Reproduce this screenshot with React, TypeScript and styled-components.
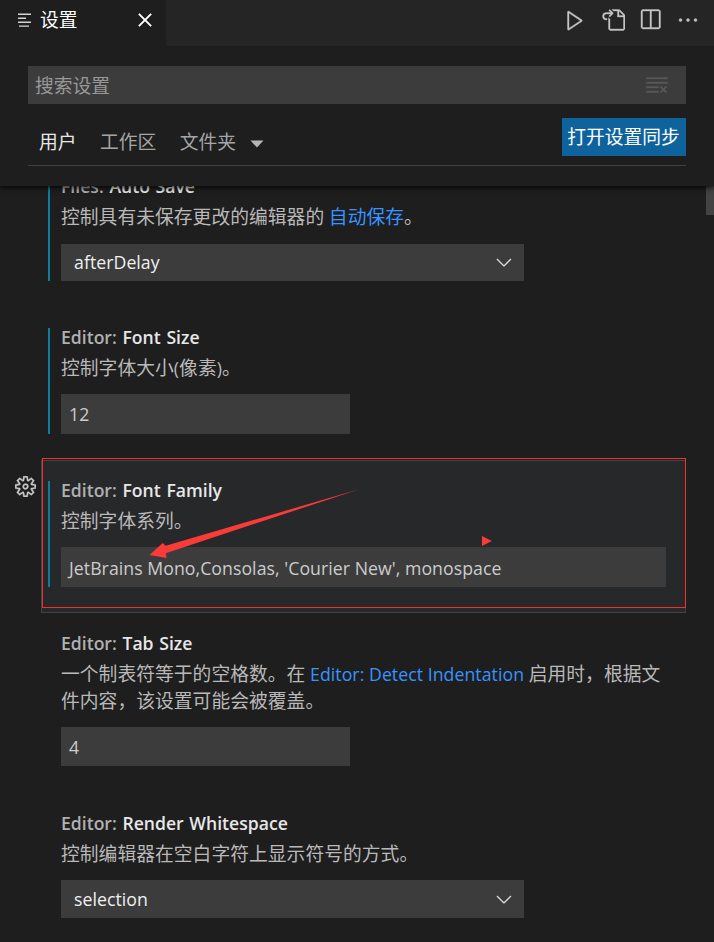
import React from "react";
import styled, { createGlobalStyle, css } from "styled-components";
import {
  VscChevronDown,
  VscClearAll,
  VscClose,
  VscEllipsis,
  VscGoToFile,
  VscPlay,
  VscSettingsGear,
  VscSplitHorizontal,
} from "react-icons/vsc";

const GlobalStyle = createGlobalStyle`
  * { box-sizing: border-box; }
  body {
    margin: 0;
    background: #1e1e1e;
    color: #cccccc;
    font-family: "Noto Sans CJK SC", sans-serif;
    font-size: 18.75px;
  }
`;

const Window = styled.div`
  position: relative;
  display: flex;
  flex-direction: column;
  width: 714px;
  height: 942px;
  overflow: hidden;
  background: #1e1e1e;
`;

const TabBar = styled.div`
  display: flex;
  justify-content: space-between;
  flex: none;
  height: 46px;
  background: #252526;
`;

const Tab = styled.div`
  display: flex;
  align-items: center;
  width: 166px;
  padding: 0 9px 6px 18px;
  background: #1e1e1e;
  color: #ffffff;
`;

const TabIcon = styled.svg`
  flex: none;
  width: 14px;
  height: 16px;
  margin-right: 8px;
`;

const TabTitle = styled.span`
  flex: 1;
  padding-bottom: 2px;
  line-height: 28px;
`;

const TabClose = styled.span`
  display: flex;
  font-size: 24px;

  svg {
    stroke: currentColor;
    stroke-width: 0.35;
  }
`;

const Actions = styled.div`
  display: flex;
  align-items: center;
  gap: 13.5px;
  padding: 0 14.5px 6px 0;
  color: #c5c5c5;
  font-size: 24px;

  svg {
    stroke: currentColor;
    stroke-width: 0.25;
  }
`;

const Header = styled.header`
  position: relative;
  z-index: 1;
  flex: none;
  height: 140px;
  padding: 20px 28px 0;
  background: #1e1e1e;
  box-shadow: 0 0 6px 1px #000000;
  clip-path: inset(0 0 -10px 0);
`;

const SearchBox = styled.div`
  display: flex;
  align-items: center;
  justify-content: space-between;
  height: 38px;
  padding: 0 17px 0 7px;
  background: #3c3c3c;
  color: #989898;
  line-height: 36px;
`;

const SearchText = styled.span`
  padding-bottom: 1px;
`;

const ClearIcon = styled.span`
  display: flex;
  color: #595959;
  font-size: 24px;

  svg {
    stroke: currentColor;
    stroke-width: 0.25;
  }
`;

const ScopeRow = styled.div`
  display: flex;
  align-items: flex-start;
  height: 62px;
  padding: 14px 0 0 11px;
  border-bottom: 1px solid #414141;
`;

const Scope = styled.span<{ $active?: boolean }>`
  display: flex;
  align-items: center;
  height: 46px;
  margin-right: 23.5px;
  line-height: 46px;
  color: ${(p) => (p.$active ? "#e7e7e7" : "#a5a5a5")};
`;

const Caret = styled.svg`
  width: 14px;
  height: 8px;
  margin: 6px 0 0 14px;
`;

const SyncButton = styled.button`
  width: 124px;
  height: 38px;
  margin-left: auto;
  padding: 0 1px 2px 0;
  border: 0;
  background: #0e639c;
  color: #ffffff;
  font: inherit;
  line-height: 36px;
  white-space: nowrap;
`;

const List = styled.main`
  flex: 1;
  min-height: 0;
  overflow: hidden;
`;

const Items = styled.div`
  margin-top: -30px;
`;

const Setting = styled.section<{ $height: number; $focused?: boolean }>`
  display: flex;
  height: ${(p) => p.$height}px;
  width: 686px;
  padding-top: 21px;
  ${(p) =>
    p.$focused &&
    css`
      background: linear-gradient(#27282a, #27282a) 41px 0 / 645px 100% no-repeat;
    `}
`;

const Gutter = styled.div`
  display: flex;
  flex: none;
  justify-content: flex-end;
  width: 48px;
  padding: 0 12.5px 0 0;
  margin-top: -5px;
  color: #c5c5c5;
  font-size: 21px;

  svg {
    stroke: currentColor;
    stroke-width: 0.3;
  }
`;

const Body = styled.div<{ $modified?: boolean }>`
  align-self: flex-start;
  width: 638px;
  padding-left: 11px;
  border-left: 2px solid ${(p) => (p.$modified ? "#0c7d9d" : "transparent")};
`;

const Latin = styled.span`
  font-family: "Open Sans", "Noto Sans", sans-serif;
  font-size: 17.7px;
  letter-spacing: 0.05px;
  line-height: 1;
  white-space: pre;
`;

const Title = styled.h3`
  height: 20px;
  margin: 0 0 5px;
  font-family: "Open Sans", "Noto Sans", sans-serif;
  font-size: 17.6px;
  font-weight: 600;
  line-height: 19px;
  word-spacing: 1.1px;
  color: #e7e7e7;
  white-space: pre;
`;

const Category = styled.span`
  color: #b0b0b0;
`;

const Description = styled.p`
  margin: 0 0 14px;
  letter-spacing: 0.05px;
  line-height: 27px;
  color: #b9b9b9;
  white-space: pre-line;
`;

const Link = styled.a`
  color: #3794ff;
`;

const Field = styled.div<{ $width: number; $height: number; $drop?: number }>`
  display: flex;
  align-items: center;
  width: ${(p) => p.$width}px;
  height: ${(p) => p.$height}px;
  padding: ${(p) => 1 + (p.$drop ?? 0)}px 8px 0;
  background: #3c3c3c;
  color: #cccccc;
`;

const Select = styled(Field)<{ $offset?: number }>`
  justify-content: space-between;
  margin-top: ${(p) => 14 + (p.$offset ?? 0)}px;
  padding: ${(p) => p.$drop ?? 0}px 8px 0 13px;
  color: #f0f0f0;

  svg {
    margin-top: -1px;
    font-size: 24px;
    color: #d8d8d8;
  }
`;

const Scrollbar = styled.div`
  position: absolute;
  top: 186px;
  right: 0;
  width: 8px;
  height: 29px;
  background: #434343;
`;

const FocusOutline = styled.div`
  position: absolute;
  top: 460px;
  left: 41px;
  width: 645px;
  height: 153px;
  border: 1px solid #414243;
`;

const Annotation = styled.svg`
  position: absolute;
  top: 450px;
  left: 0;
  width: 714px;
  height: 170px;
  pointer-events: none;
`;

interface SettingItemProps {
  category: string;
  name: string;
  description: React.ReactNode;
  height: number;
  modified?: boolean;
  focused?: boolean;
  children: React.ReactNode;
}

function SettingItem(props: SettingItemProps) {
  return (
    <Setting $height={props.height} $focused={props.focused}>
      <Gutter>{props.focused && <VscSettingsGear />}</Gutter>
      <Body $modified={props.modified}>
        <Title>
          <Category>{props.category}: </Category>
          {props.name}
        </Title>
        <Description>{props.description}</Description>
        {props.children}
      </Body>
    </Setting>
  );
}

export default function App() {
  return (
    <Window>
      <GlobalStyle />
      <TabBar>
        <Tab>
          <TabIcon viewBox="0 0 14 16" fill="#d4d4d4">
            <path d="M0 1.5h13v1.4H0zM0 5.6h8v1.4H0zM0 9.5h13v1.4H0zM1 13.4h10v1.4H1z" />
          </TabIcon>
          <TabTitle>设置</TabTitle>
          <TabClose>
            <VscClose />
          </TabClose>
        </Tab>
        <Actions>
          <VscPlay />
          <VscGoToFile />
          <VscSplitHorizontal />
          <VscEllipsis />
        </Actions>
      </TabBar>
      <Header>
        <SearchBox>
          <SearchText>搜索设置</SearchText>
          <ClearIcon>
            <VscClearAll />
          </ClearIcon>
        </SearchBox>
        <ScopeRow>
          <Scope $active>用户</Scope>
          <Scope>工作区</Scope>
          <Scope>
            文件夹
            <Caret viewBox="0 0 14 8">
              <path d="M0.5 0.5h13L7 7.5z" fill="#b5b5b5" />
            </Caret>
          </Scope>
          <SyncButton>打开设置同步</SyncButton>
        </ScopeRow>
      </Header>
      <List>
        <Items>
          <SettingItem
            category="Files"
            name="Auto Save"
            height={151}
            modified
            description={
              <>
                控制具有未保存更改的编辑器的<Latin> </Latin>
                <Link>自动保存</Link>。
              </>
            }
          >
            <Select $width={463} $height={37} $offset={1}>
              <Latin>afterDelay</Latin>
              <VscChevronDown />
            </Select>
          </SettingItem>
          <SettingItem
            category="Editor"
            name="Font Size"
            height={153}
            modified
            description={
              <>
                控制字体大小<Latin>(</Latin>像素<Latin>)</Latin>。
              </>
            }
          >
            <Field $width={289} $height={40}>
              <Latin>12</Latin>
            </Field>
          </SettingItem>
          <SettingItem
            category="Editor"
            name="Font Family"
            height={153}
            modified
            focused
            description="控制字体系列。"
          >
            <Field $width={605} $height={40} $drop={2}>
              <Latin>JetBrains Mono,Consolas, 'Courier New', monospace</Latin>
            </Field>
          </SettingItem>
          <SettingItem
            category="Editor"
            name="Tab Size"
            height={180}
            description={
              <>
                一个制表符等于的空格数。在<Latin> </Latin>
                <Link>
                  <Latin>Editor: Detect Indentation</Latin>
                </Link>
                <Latin> </Latin>启用时，根据文{"\n"}件内容，该设置可能会被覆盖。
              </>
            }
          >
            <Field $width={289} $height={39} $drop={2}>
              <Latin>4</Latin>
            </Field>
          </SettingItem>
          <SettingItem
            category="Editor"
            name="Render Whitespace"
            height={150}
            description="控制编辑器在空白字符上显示符号的方式。"
          >
            <Select $width={463} $height={38} $drop={1}>
              <Latin>selection</Latin>
              <VscChevronDown />
            </Select>
          </SettingItem>
        </Items>
      </List>
      <Scrollbar />
      <FocusOutline />
      <Annotation viewBox="0 450 714 170" fill="#fb3b38">
        <rect x="42.5" y="458.5" width="643" height="149" fill="none" stroke="#f2302f" />
        <path d="M149.5 555L162.7 543L165.7 545.7L360 489L165.7 553.2L166.7 558Z" />
        <path d="M482 536L491.8 541L482 546Z" />
      </Annotation>
    </Window>
  );
}
